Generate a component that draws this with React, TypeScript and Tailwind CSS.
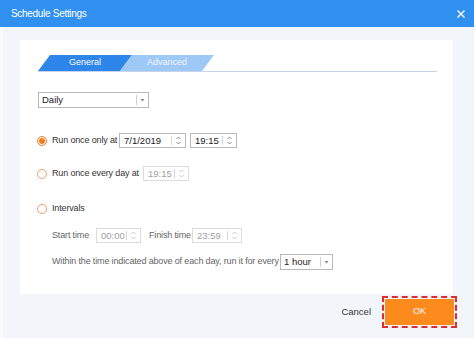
import React from "react";

const sans = { fontFamily: '"Liberation Sans", Arial, sans-serif' };

function Spin({ disabled }: { disabled?: boolean }) {
  const c = disabled ? "#c8c8c8" : "#8a8a8a";
  return (
    <div className="flex items-center h-full py-[2px]">
      <div className="w-px h-full bg-[#d6d6d6]" />
      <svg width="11" height="11" viewBox="0 0 11 11" className="ml-[1px]">
        <path d="M3.5 4 L5.5 2 L7.5 4" fill="none" stroke={c} strokeWidth="1" />
        <path d="M3.5 7 L5.5 9 L7.5 7" fill="none" stroke={c} strokeWidth="1" />
      </svg>
    </div>
  );
}

function SpinBox({ value, w, disabled }: { value: string; w: string; disabled?: boolean }) {
  return (
    <div
      className={`${w} h-[15px] border flex items-center justify-between pl-[4px] pr-[1px] shrink-0 ${
        disabled ? "border-[#dcdcdc] text-[#a0a0a0]" : "border-[#b9b9b9] text-[#222]"
      } text-[9.5px] leading-none tracking-normal`}
    >
      <span>{value}</span>
      <Spin disabled={disabled} />
    </div>
  );
}

function Select({ value, w }: { value: string; w: string }) {
  return (
    <div
      className={`${w} h-[16px] border border-[#b9b9b9] flex items-center justify-between pl-[3px] shrink-0 text-[9.5px] leading-none tracking-normal text-[#222] bg-white`}
    >
      <span>{value}</span>
      <div className="flex items-center h-full py-[2px]">
        <div className="w-px h-full bg-[#d0d0d0]" />
        <svg width="11" height="10" viewBox="0 0 11 10">
          <path d="M3.5 4 L7.5 4 L5.5 6.5 Z" fill="#8a8a8a" />
        </svg>
      </div>
    </div>
  );
}

function Radio({ checked }: { checked?: boolean }) {
  return (
    <div
      className={`w-[10px] h-[10px] rounded-full border flex items-center justify-center bg-white shrink-0 ${
        checked ? "border-[#f07d22]" : "border-[#f0a070]"
      }`}
    >
      {checked && <div className="w-[6px] h-[6px] rounded-full bg-[#f57f1f]" />}
    </div>
  );
}

export default function App() {
  return (
    <div className="w-[474px] h-[338px] bg-[#f2f5f9] flex flex-col overflow-hidden" style={sans}>
      <div className="h-[27px] bg-[#3090ef] flex items-center justify-between pl-[11px] pr-[9px] shrink-0">
        <span className="text-white text-[10px] tracking-[-0.3px]">Schedule Settings</span>
        <svg width="8" height="8" viewBox="0 0 8 8">
          <path d="M0.5 0.5 L7.5 7.5 M7.5 0.5 L0.5 7.5" stroke="white" strokeWidth="1.4" />
        </svg>
      </div>
      <div className="flex-1 flex flex-col border-l-[3px] border-[#f8fafc]">
        <div className="pt-[13px] pl-[17px] pr-[21px]">
          <div className="bg-white h-[254px] pl-[18px] pr-[16px] pt-[15px] flex flex-col text-[9px] tracking-[-0.15px]">
            <div className="flex border-b border-[#c5d4e8]">
              <div className="w-[94px] h-[16px] bg-[#2e86ea] text-white flex items-center justify-center tracking-normal [clip-path:polygon(12px_0,100%_0,calc(100%-12px)_100%,0_100%)]">
                General
              </div>
              <div className="w-[94px] h-[16px] -ml-[12px] bg-[#9ec9f7] text-[#eef6ff] flex items-center justify-center tracking-normal [clip-path:polygon(12px_0,100%_0,calc(100%-12px)_100%,0_100%)]">
                Advanced
              </div>
            </div>

            <div className="mt-[20px]">
              <Select value="Daily" w="w-[111px]" />
            </div>

            <div className="mt-[25px] flex items-center h-[15px] text-[#333]">
              <div className="-ml-[1px]">
                <Radio checked />
              </div>
              <span className="ml-[5px] w-[67px] whitespace-nowrap">Run once only at</span>
              <SpinBox value="7/1/2019" w="w-[67px]" />
              <div className="ml-[4px]">
                <SpinBox value="19:15" w="w-[47px]" />
              </div>
            </div>

            <div className="mt-[18px] flex items-center h-[15px] text-[#333]">
              <div className="-ml-[1px]">
                <Radio />
              </div>
              <span className="ml-[5px] w-[91px] whitespace-nowrap">Run once every day at</span>
              <SpinBox value="19:15" w="w-[46px]" disabled />
            </div>

            <div className="mt-[20px] flex items-center h-[15px] text-[#333]">
              <div className="-ml-[1px]">
                <Radio />
              </div>
              <span className="ml-[5px]">Intervals</span>
            </div>

            <div className="mt-[12px] flex items-center h-[15px] text-[#666] pl-[14px]">
              <span className="w-[44px] whitespace-nowrap">Start time</span>
              <SpinBox value="00:00" w="w-[45px]" disabled />
              <span className="ml-[8px] w-[43px] whitespace-nowrap">Finish time</span>
              <SpinBox value="23:59" w="w-[50px]" disabled />
            </div>

            <div className="mt-[11px] flex items-center h-[16px] text-[#666] pl-[14px]">
              <span className="w-[228px] whitespace-nowrap">Within the time indicated above of each day, run it for every</span>
              <Select value="1 hour" w="w-[53px]" />
            </div>
          </div>
        </div>
        <div className="flex-1 flex items-center justify-end pr-[20px] pb-[8px]">
          <span className="text-[9.5px] text-[#333] mr-[14px]">Cancel</span>
          <div className="w-[69px] h-[26px] bg-[#fd8a1d] text-white text-[9px] flex items-center justify-center outline-2 outline-dashed outline-[#df2a2e] outline-offset-[1px]">
            OK
          </div>
        </div>
      </div>
    </div>
  );
}
